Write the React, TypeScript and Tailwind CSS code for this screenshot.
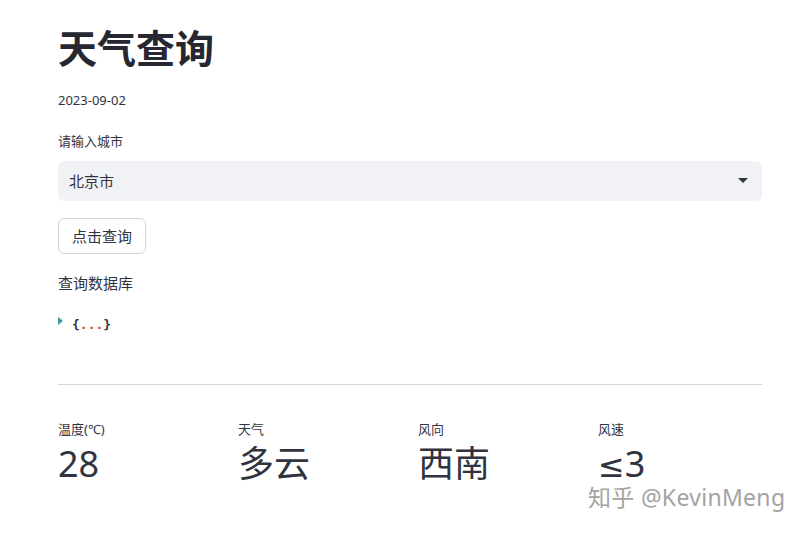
import React from "react";

const font = { fontFamily: '"Noto Sans", "Noto Sans CJK SC", sans-serif' };

export default function App() {
  const metrics = [
    { label: "温度(℃)", value: "28" },
    { label: "天气", value: "多云" },
    { label: "风向", value: "西南" },
    { label: "风速", value: "≤3" },
  ];
  return (
    <div className="relative w-[807px] h-[534px] bg-white text-[#31333f] overflow-hidden" style={font}>
      <div className="px-[58px] w-[807px] pr-[45px] pt-[22px]">
        <h1 className="text-[39px] font-bold leading-[52px] text-[#262730]">天气查询</h1>
        <div className="mt-[16px] text-[13px] leading-[20px]">2023-09-02</div>
        <div className="mt-[21px] text-[13px] leading-[20px]">请输入城市</div>
        <div className="mt-[10px] h-[40px] rounded-md bg-[#f0f2f6] flex items-center justify-between pl-[11px] pr-[14px]">
          <span className="text-[15px]">北京市</span>
          <svg width="10" height="6" viewBox="0 0 10 6"><path d="M0 0 L10 0 L5 5 Z" fill="#31333f" /></svg>
        </div>
        <button className="mt-[17px] h-[36px] px-[13px] border border-[#d5d6db] rounded-md text-[15px] bg-white">点击查询</button>
        <div className="mt-[17px] text-[15px] leading-[24px]">查询数据库</div>
        <div className="mt-[20px] flex items-center gap-[8px] h-[20px]">
          <svg width="6" height="10" viewBox="0 0 6 10" className="-mt-[6px]"><path d="M0 0 L5 4 L0 8 Z" fill="#3b9a9c" /></svg>
          <span className="text-[13px] font-bold" style={{ fontFamily: '"DejaVu Sans Mono", monospace' }}>
            {"{"}<span className="text-[#cb4b16]">...</span>{"}"}
          </span>
        </div>
        <div className="mt-[49px] border-t border-[#d5d6db]" />
        <div className="mt-[34px] grid grid-cols-4 gap-[16px]">
          {metrics.map((m) => (
            <div key={m.label}>
              <div className="text-[13px] leading-[20px]">{m.label}</div>
              <div className="text-[36px] leading-[38px] mt-[6px]">
                {m.value.startsWith("≤") ? (
                  <>
                    <span style={{ fontFamily: '"DejaVu Sans", sans-serif' }} className="text-[32px]">≤</span>3
                  </>
                ) : (
                  m.value
                )}
              </div>
            </div>
          ))}
        </div>
      </div>
      <div
        className="absolute left-[588px] top-[485px] text-[23px] leading-[24px] tracking-[0.3px] text-[#a3a3a3]"
        style={{ fontFamily: '"Noto Sans", "Noto Sans CJK SC", sans-serif', textShadow: "0 0 2px #fff, 0 0 2px #fff" }}
      >
        知乎 @KevinMeng
      </div>
    </div>
  );
}
